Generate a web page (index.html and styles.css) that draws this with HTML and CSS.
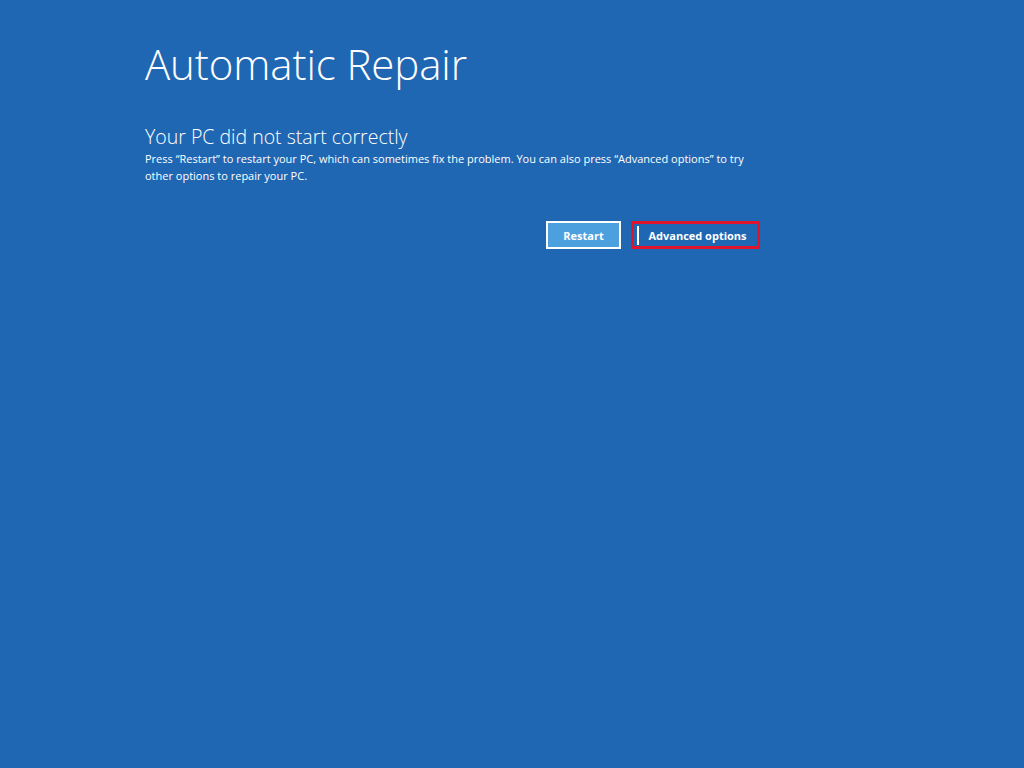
FILE: index.html
```html
<!DOCTYPE html>
<html lang="en">
<head>
<meta charset="utf-8">
<title>Automatic Repair</title>
<link rel="stylesheet" href="styles.css">
</head>
<body>
<main class="screen">
  <h1 class="title">Automatic Repair</h1>
  <section class="content">
    <h2 class="subtitle">Your PC did not start correctly</h2>
    <p class="message">Press “Restart” to restart your PC, which can sometimes fix the problem. You can also press “Advanced options” to try other options to repair your PC.</p>
    <div class="actions">
      <button class="btn btn-primary" type="button">Restart</button>
      <button class="btn btn-secondary" type="button"><span class="caret"></span>Advanced options</button>
    </div>
  </section>
</main>
</body>
</html>
```
FILE: styles.css
```css
html, body {
  margin: 0;
  padding: 0;
  height: 100%;
}

body {
  background: #2067b3;
  color: #ffffff;
  font-family: "Open Sans", "Noto Sans", "Liberation Sans", sans-serif;
}

.screen {
  padding: 34px 0 0 145px;
  width: 615px;
}

.title {
  margin: 0;
  font-size: 42px;
  font-weight: 300;
  line-height: 60px;
  letter-spacing: -0.1px;
}

.content {
  margin-top: 30px;
}

.subtitle {
  margin: 0;
  font-size: 19.5px;
  font-weight: 300;
  line-height: 26px;
}

.message {
  margin: 0;
  font-size: 11px;
  line-height: 17px;
}

.actions {
  display: flex;
  justify-content: flex-end;
  gap: 10px;
  margin-top: 37px;
}

.btn {
  box-sizing: border-box;
  height: 28px;
  font-family: inherit;
  font-size: 11px;
  font-weight: 700;
  color: #ffffff;
  padding: 0;
  display: flex;
  align-items: center;
  justify-content: center;
}

.btn-primary {
  width: 75px;
  background: #4ca0de;
  border: 2px solid #ffffff;
}

.btn-secondary {
  width: 129px;
  background: #2067b3;
  border: 3px solid #e0142b;
  position: relative;
  padding-left: 4px;
}

.caret {
  position: absolute;
  left: 3px;
  top: 2px;
  width: 2px;
  height: 19px;
  background: #ffffff;
}
```
